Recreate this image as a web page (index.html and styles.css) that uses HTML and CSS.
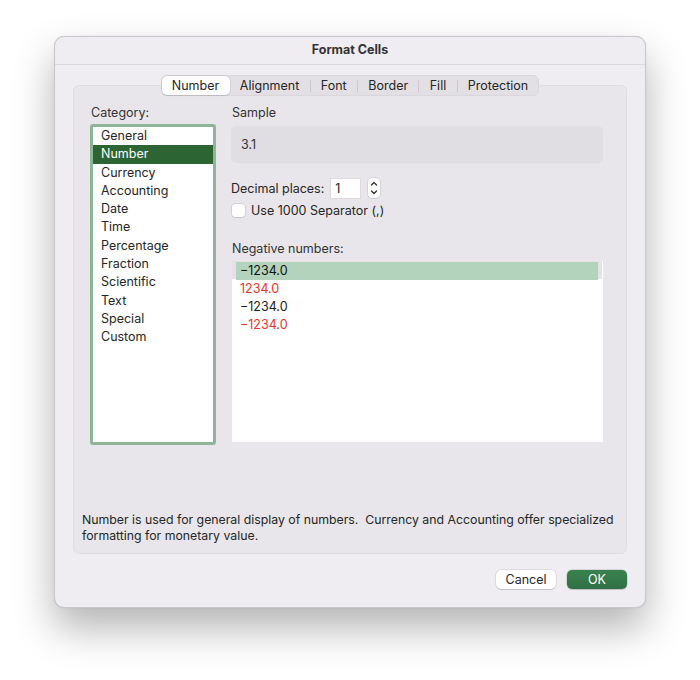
FILE: index.html
```html
<!DOCTYPE html>
<html>
<head>
<meta charset="utf-8">
<link rel="stylesheet" href="styles.css">
</head>
<body>
<div class="window">
  <div class="titlebar">Format Cells</div>
  <div class="content">
    <div class="tabs">
      <span class="tab active">Number</span>
      <span class="tab">Alignment</span><span class="sep"></span>
      <span class="tab">Font</span><span class="sep"></span>
      <span class="tab">Border</span><span class="sep"></span>
      <span class="tab">Fill</span><span class="sep"></span>
      <span class="tab">Protection</span>
    </div>
    <div class="group">
      <div class="columns">
        <div class="left">
          <div class="label">Category:</div>
          <ul class="catlist">
            <li>General</li>
            <li class="sel">Number</li>
            <li>Currency</li>
            <li>Accounting</li>
            <li>Date</li>
            <li>Time</li>
            <li>Percentage</li>
            <li>Fraction</li>
            <li>Scientific</li>
            <li>Text</li>
            <li>Special</li>
            <li>Custom</li>
          </ul>
        </div>
        <div class="right">
          <div class="label">Sample</div>
          <div class="sample">3.1</div>
          <div class="decrow">
            <span class="declabel">Decimal places:</span>
            <span class="decinput">1</span>
            <span class="stepper">
              <svg width="12" height="20" viewBox="0 0 12 20">
                <path d="M3.5 7 L6 4.5 L8.5 7" fill="none" stroke="#333" stroke-width="1.3" stroke-linecap="round" stroke-linejoin="round"/>
                <path d="M3.5 13 L6 15.5 L8.5 13" fill="none" stroke="#333" stroke-width="1.3" stroke-linecap="round" stroke-linejoin="round"/>
              </svg>
            </span>
          </div>
          <div class="checkrow">
            <span class="checkbox"></span>
            <span>Use 1000 Separator (,)</span>
          </div>
          <div class="label neglabel">Negative numbers:</div>
          <ul class="neglist">
            <li class="sel">−1234.0</li>
            <li class="red">1234.0</li>
            <li>−1234.0</li>
            <li class="red">−1234.0</li>
          </ul>
        </div>
      </div>
      <p class="desc">Number is used for general display of numbers.&nbsp; Currency and Accounting offer specialized formatting for monetary value.</p>
    </div>
    <div class="buttons">
      <span class="btn cancel">Cancel</span>
      <span class="btn ok">OK</span>
    </div>
  </div>
</div>
</body>
</html>
```
FILE: styles.css
```css
html, body {
  margin: 0;
  padding: 0;
  background: #ffffff;
}
body {
  font-family: "Inter", "Liberation Sans", sans-serif;
  font-size: 12.5px;
  color: #262626;
  padding: 36px 0 0 54px;
  min-height: 680px;
  box-sizing: border-box;
}
.window {
  width: 592px;
  height: 572px;
  box-sizing: border-box;
  background: #f0edf2;
  border: 1px solid #c9c7cb;
  border-radius: 10px;
  box-shadow: 0 20px 40px rgba(0,0,0,0.30), 0 0 1px rgba(0,0,0,0.2);
  display: flex;
  flex-direction: column;
}
.titlebar {
  height: 27px;
  line-height: 26px;
  text-align: center;
  font-weight: 700;
  font-size: 12.5px;
  color: #333;
  border-bottom: 1px solid #dcd9de;
}
.content {
  padding: 10px 18px 0 18px;
  display: flex;
  flex-direction: column;
}
.tabs {
  align-self: center;
  display: flex;
  align-items: center;
  height: 21px;
  box-sizing: border-box;
  background: #e2e0e4;
  border: 1px solid #d9d7db;
  border-radius: 6px;
  position: relative;
  z-index: 1;
}
.tab {
  padding: 0 10.3px;
  height: 19px;
  line-height: 19px;
  color: #262626;
}
.tab.active {
  background: #ffffff;
  border-radius: 5px;
  box-shadow: 0 0 0 0.5px rgba(0,0,0,0.12), 0 1px 1px rgba(0,0,0,0.08);
}
.sep {
  width: 1px;
  height: 12px;
  background: #cbc9cd;
}
.group {
  margin-top: -11px;
  background: #e8e6ea;
  border: 1px solid #dfdde1;
  border-radius: 6px;
  height: 469px;
  box-sizing: border-box;
  padding: 19px 23px 9px 16px;
  display: flex;
  flex-direction: column;
  justify-content: space-between;
}
.columns {
  display: grid;
  grid-template-columns: 126px 372px;
  column-gap: 15px;
}
.label {
  height: 16px;
  line-height: 16px;
  color: #333;
  margin-left: 1px;
}
.catlist {
  list-style: none;
  margin: 3px 0 0 0;
  padding: 0;
  height: 321px;
  box-sizing: border-box;
  background: #ffffff;
  border: 3px solid #8fb597;
  border-radius: 3px;
}
.catlist li {
  height: 18.3px;
  line-height: 18.3px;
  padding-left: 8px;
}
.catlist li.sel {
  background: #2c6433;
  color: #ffffff;
}
.sample {
  margin-top: 5px;
  height: 37px;
  line-height: 37px;
  background: #e0dee2;
  border-radius: 5px;
  padding-left: 10px;
  color: #333;
}
.decrow {
  margin-top: 15px;
  display: flex;
  align-items: center;
  height: 20px;
}
.declabel {
  color: #262626;
}
.decinput {
  margin-left: 7px;
  width: 29px;
  height: 19px;
  line-height: 19px;
  box-sizing: border-box;
  padding-left: 4px;
  background: #ffffff;
  box-shadow: 0 0 0 0.5px rgba(0,0,0,0.1);
}
.stepper {
  margin-left: 8px;
  width: 12px;
  height: 20px;
  display: flex;
  background: #fafafb;
  border-radius: 4px;
  box-shadow: 0 0 0 0.5px rgba(0,0,0,0.15), 0 1px 1px rgba(0,0,0,0.06);
}
.checkrow {
  margin-top: 2px;
  display: flex;
  align-items: center;
  height: 20px;
  gap: 6px;
}
.checkbox {
  margin-left: 1px;
  width: 13px;
  height: 13px;
  box-sizing: border-box;
  background: #ffffff;
  border-radius: 3px;
  box-shadow: 0 0 0 0.5px rgba(0,0,0,0.18), 0 1px 1px rgba(0,0,0,0.06);
}
.neglabel {
  margin-top: 21px;
}
.neglist {
  list-style: none;
  margin: 4px 0 0 1px;
  padding: 1px 0 0 0;
  width: 371px;
  height: 181px;
  box-sizing: border-box;
  background: #ffffff;
}
.neglist li {
  height: 18px;
  line-height: 18px;
  padding-left: 8px;
  color: #1a1a1a;
}
.neglist li.sel {
  background: #b3d3bd;
  box-shadow: -4px -1px 0 0 #e4e2e6, 4px -1px 0 0 #e4e2e6;
  margin: 0 5px 0 4px;
  padding-left: 4px;
  color: #111;
}
.neglist li.red {
  color: #ec3329;
}
.desc {
  margin: 0 -20px 0 -8px;
  font-size: 12.3px;
  line-height: 16px;
  color: #262626;
}
.buttons {
  display: flex;
  justify-content: flex-end;
  gap: 11px;
  margin-top: 16px;
}
.btn {
  width: 60px;
  height: 19px;
  line-height: 19px;
  text-align: center;
  border-radius: 5px;
  font-size: 12.5px;
}
.cancel {
  background: #ffffff;
  color: #262626;
  box-shadow: 0 0 0 0.5px rgba(0,0,0,0.15), 0 1px 1px rgba(0,0,0,0.1);
}
.ok {
  background: linear-gradient(#3a8250, #2f7044);
  color: #ffffff;
  box-shadow: 0 0 0 0.5px rgba(0,0,0,0.2), 0 1px 1px rgba(0,0,0,0.1);
}
```
